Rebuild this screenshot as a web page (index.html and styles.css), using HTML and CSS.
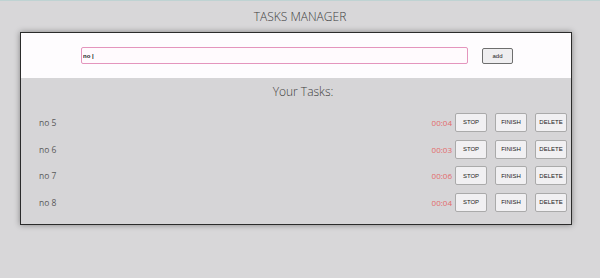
FILE: index.html
```html
<!DOCTYPE html>
<html lang="en">
<head>
  <meta charset="UTF-8" />
  <title>Tasks Manager</title>
  <link rel="stylesheet" href="styles.css">
</head>
<body>
  <h1>TASKS MANAGER</h1>

  <div class="app">
    <form class="nueva">
      <input type="text" value="no |">
      <button type="button" class="add">add</button>
    </form>

    <div class="lista">
      <h2>Your Tasks:</h2>

      <div class="tarea">
        <span class="nombre">no 5</span>
        <span class="tiempo">00:04</span>
        <button>STOP</button>
        <button>FINISH</button>
        <button>DELETE</button>
      </div>
      <div class="tarea">
        <span class="nombre">no 6</span>
        <span class="tiempo">00:03</span>
        <button>STOP</button>
        <button>FINISH</button>
        <button>DELETE</button>
      </div>
      <div class="tarea">
        <span class="nombre">no 7</span>
        <span class="tiempo">00:06</span>
        <button>STOP</button>
        <button>FINISH</button>
        <button>DELETE</button>
      </div>
      <div class="tarea">
        <span class="nombre">no 8</span>
        <span class="tiempo">00:04</span>
        <button>STOP</button>
        <button>FINISH</button>
        <button>DELETE</button>
      </div>
    </div>
  </div>
</body>
</html>
```

FILE: styles.css
```css
body {
  margin: 0;
  font-family: "Open Sans", "Liberation Sans", sans-serif;
  font-weight: 300;
  background: #d8d7d9;
  color: #555;
  border-top: 1px solid #bfd3d3;
  height: 277px;
}

h1 {
  margin: 0;
  padding-top: 8px;
  font-size: 12px;
  font-weight: 300;
  text-align: center;
  color: #3e3e3e;
  line-height: 16px;
}

.app {
  margin: 7px 0 0 20px;
  width: 550px;
  border: 1.5px solid #2b2b2b;
  box-shadow: 0 0 6px #00000066;
}

.nueva {
  background: #fefcfe;
  height: 45px;
  display: flex;
  align-items: center;
  padding-left: 60px;
  margin: 0;
}

.nueva input {
  box-sizing: border-box;
  width: 387px;
  height: 17px;
  border: 1.5px solid #e495bd;
  border-radius: 2px;
  padding: 0 1px;
  font-family: "Liberation Sans", sans-serif;
  font-size: 6px;
  font-weight: 700;
  color: #222;
  background: #fffafd;
  outline: none;
}

button {
  box-sizing: border-box;
  border: 1px solid #9a9a9a;
  border-radius: 2px;
  background: #efeef0;
  font-family: "Liberation Sans", sans-serif;
  font-size: 6px;
  color: #222;
  padding: 0;
}

.add {
  margin-left: 14px;
  width: 31px;
  height: 16px;
  border-color: #6e6e6e;
}

.lista {
  background: #d6d5d7;
  padding: 6px 4px 8px 18px;
}

h2 {
  margin: 0 0 9px;
  font-size: 12px;
  font-weight: 300;
  text-align: center;
  color: #3e3e3e;
  line-height: 16px;
}

.tarea {
  display: flex;
  align-items: center;
  height: 26.7px;
}

.nombre {
  flex: 1;
  font-size: 8.5px;
  font-weight: 400;
  color: #5a5a5a;
}

.tiempo {
  font-size: 8px;
  font-weight: 400;
  color: #e36b6b;
  margin-right: 3px;
}

.tarea button {
  width: 32px;
  height: 19px;
  margin-left: 8px;
  border-color: #aaa;
  background: #f1f0f2;
}

.tarea button:first-of-type {
  margin-left: 0;
}
```
